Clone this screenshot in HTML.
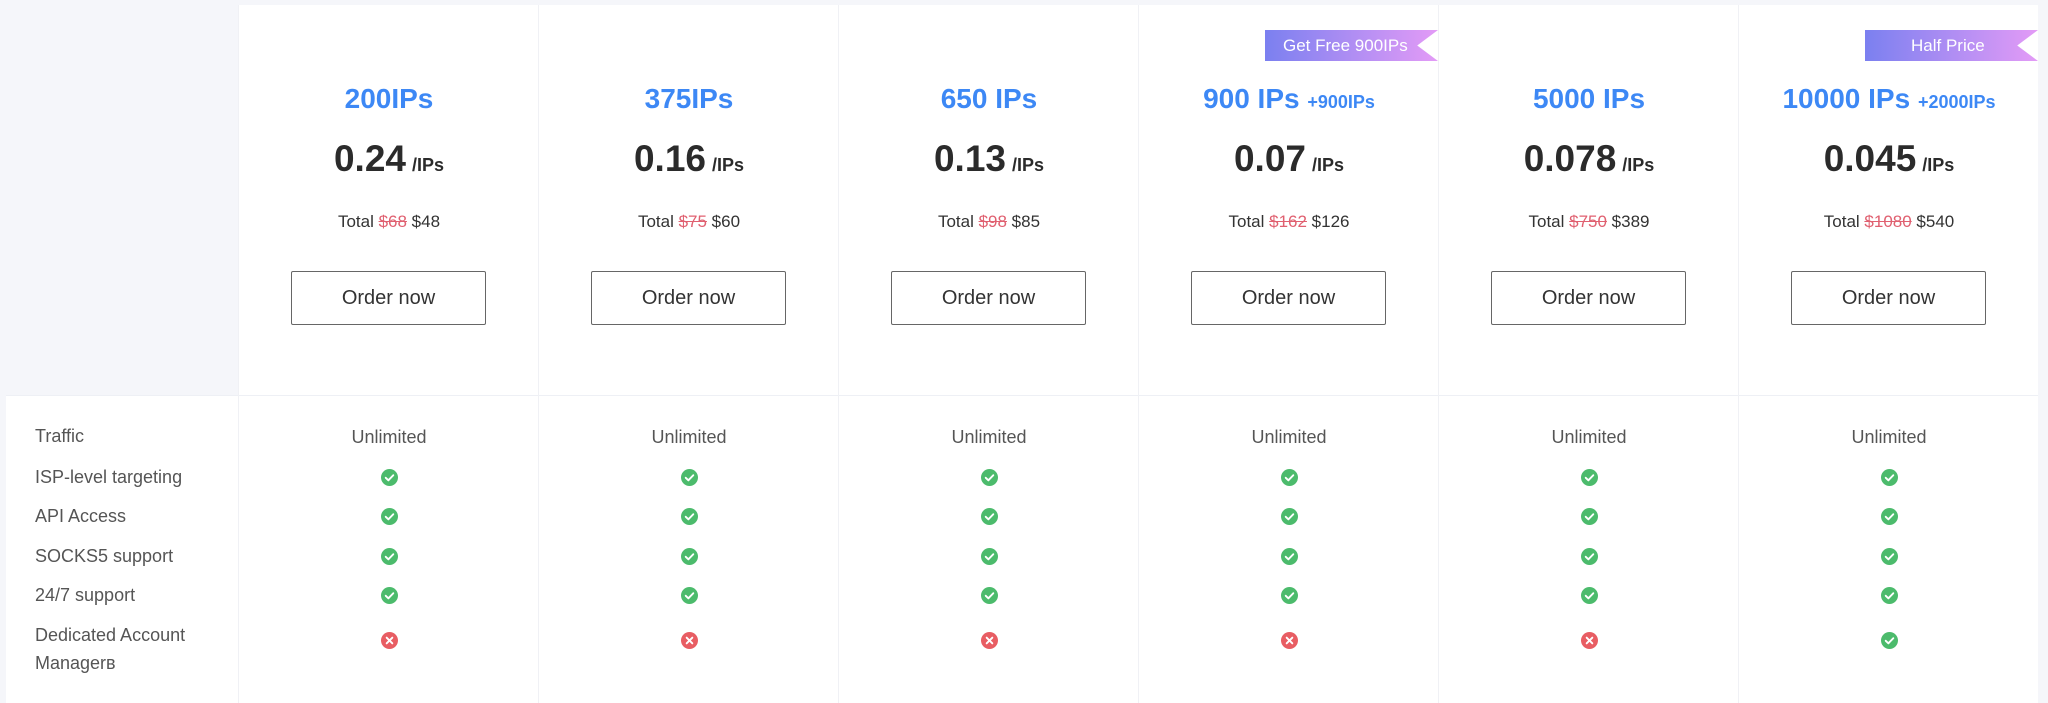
<!DOCTYPE html>
<html><head><meta charset="utf-8"><style>
*{margin:0;padding:0;box-sizing:border-box}
body{width:2048px;height:703px;background:#f5f6fa;font-family:"Liberation Sans",Arial,sans-serif;position:relative;overflow:hidden}
.top{position:absolute;left:238px;top:5px;width:1800px;height:390px;background:#fff}
.bot{position:absolute;left:6px;top:395px;width:2032px;height:308px;background:#fff;border-top:1px solid #eef0f5}
.col{position:absolute;top:5px;width:300px;height:698px;border-left:1px solid #f0f1f5}
.t{position:absolute;left:0;width:300px;text-align:center;top:76px;font-size:28px;font-weight:bold;color:#3d88f5;line-height:36px}
.t small{font-size:18px}
.p{position:absolute;left:0;width:300px;text-align:center;top:131px;font-size:37px;font-weight:bold;color:#2b2b2b;line-height:46px}
.p span{font-size:18px;margin-left:6px}
.tot{position:absolute;left:0;width:300px;text-align:center;top:206px;font-size:17px;color:#333;line-height:22px}
.tot s{color:#e06070}
.btn{position:absolute;left:52px;top:266px;width:195px;height:54px;border:1px solid #666;border-radius:2px;text-align:center;line-height:52px;font-size:20px;color:#333}
.u{position:absolute;left:0;width:300px;text-align:center;top:421px;font-size:18px;color:#555;line-height:22px}
.ic{position:absolute;left:142px;width:17px;height:17px}
.lab{position:absolute;left:35px;font-size:18px;color:#555;line-height:22px}
.rib{position:absolute;top:30px;height:31px;color:#fff;font-size:17px;line-height:31px;padding-left:18px;background:linear-gradient(90deg,#7b80f0,#e39bf6);clip-path:polygon(0 0,100% 0,88% 50%,100% 100%,0 100%)}
</style></head><body>
<div class="top"></div>
<div class="bot"></div>
<div class="lab" style="top:425px">Traffic</div>
<div class="lab" style="top:466px">ISP-level targeting</div>
<div class="lab" style="top:505px">API Access</div>
<div class="lab" style="top:545px">SOCKS5 support</div>
<div class="lab" style="top:584px">24/7 support</div>
<div class="lab" style="top:624px">Dedicated Account</div>
<div class="lab" style="top:652px">Managerв</div>

<svg width="0" height="0" style="position:absolute"><defs>
<symbol id="ok" viewBox="0 0 18 18"><circle cx="9" cy="9" r="9" fill="#4cbb6c"/><path d="M5 9.3l2.8 2.7L13 6.6" fill="none" stroke="#fff" stroke-width="2" stroke-linecap="round" stroke-linejoin="round"/></symbol>
<symbol id="no" viewBox="0 0 18 18"><circle cx="9" cy="9" r="9" fill="#e85d63"/><path d="M6 6l6 6M12 6l-6 6" stroke="#fff" stroke-width="2" stroke-linecap="round"/></symbol>
</defs></svg>

<div class="col" style="left:238px">
<div class="t">200IPs</div><div class="p">0.24<span>/IPs</span></div>
<div class="tot">Total <s>$68</s> $48</div><div class="btn">Order now</div>
<div class="u">Unlimited</div>
<svg class="ic" style="top:464px"><use href="#ok"/></svg><svg class="ic" style="top:503px"><use href="#ok"/></svg><svg class="ic" style="top:543px"><use href="#ok"/></svg><svg class="ic" style="top:582px"><use href="#ok"/></svg><svg class="ic" style="top:627px"><use href="#no"/></svg>
</div>
<div class="col" style="left:538px">
<div class="t">375IPs</div><div class="p">0.16<span>/IPs</span></div>
<div class="tot">Total <s>$75</s> $60</div><div class="btn">Order now</div>
<div class="u">Unlimited</div>
<svg class="ic" style="top:464px"><use href="#ok"/></svg><svg class="ic" style="top:503px"><use href="#ok"/></svg><svg class="ic" style="top:543px"><use href="#ok"/></svg><svg class="ic" style="top:582px"><use href="#ok"/></svg><svg class="ic" style="top:627px"><use href="#no"/></svg>
</div>
<div class="col" style="left:838px">
<div class="t">650 IPs</div><div class="p">0.13<span>/IPs</span></div>
<div class="tot">Total <s>$98</s> $85</div><div class="btn">Order now</div>
<div class="u">Unlimited</div>
<svg class="ic" style="top:464px"><use href="#ok"/></svg><svg class="ic" style="top:503px"><use href="#ok"/></svg><svg class="ic" style="top:543px"><use href="#ok"/></svg><svg class="ic" style="top:582px"><use href="#ok"/></svg><svg class="ic" style="top:627px"><use href="#no"/></svg>
</div>
<div class="col" style="left:1138px">
<div class="t">900 IPs <small>+900IPs</small></div><div class="p">0.07<span>/IPs</span></div>
<div class="tot">Total <s>$162</s> $126</div><div class="btn">Order now</div>
<div class="u">Unlimited</div>
<svg class="ic" style="top:464px"><use href="#ok"/></svg><svg class="ic" style="top:503px"><use href="#ok"/></svg><svg class="ic" style="top:543px"><use href="#ok"/></svg><svg class="ic" style="top:582px"><use href="#ok"/></svg><svg class="ic" style="top:627px"><use href="#no"/></svg>
</div>
<div class="col" style="left:1438px">
<div class="t">5000 IPs</div><div class="p">0.078<span>/IPs</span></div>
<div class="tot">Total <s>$750</s> $389</div><div class="btn">Order now</div>
<div class="u">Unlimited</div>
<svg class="ic" style="top:464px"><use href="#ok"/></svg><svg class="ic" style="top:503px"><use href="#ok"/></svg><svg class="ic" style="top:543px"><use href="#ok"/></svg><svg class="ic" style="top:582px"><use href="#ok"/></svg><svg class="ic" style="top:627px"><use href="#no"/></svg>
</div>
<div class="col" style="left:1738px">
<div class="t">10000 IPs <small>+2000IPs</small></div><div class="p">0.045<span>/IPs</span></div>
<div class="tot">Total <s>$1080</s> $540</div><div class="btn">Order now</div>
<div class="u">Unlimited</div>
<svg class="ic" style="top:464px"><use href="#ok"/></svg><svg class="ic" style="top:503px"><use href="#ok"/></svg><svg class="ic" style="top:543px"><use href="#ok"/></svg><svg class="ic" style="top:582px"><use href="#ok"/></svg><svg class="ic" style="top:627px"><use href="#ok"/></svg>
</div>
<div class="rib" style="left:1265px;width:173px">Get Free 900IPs</div>
<div class="rib" style="left:1865px;width:173px;padding-left:46px">Half Price</div>
</body></html>
